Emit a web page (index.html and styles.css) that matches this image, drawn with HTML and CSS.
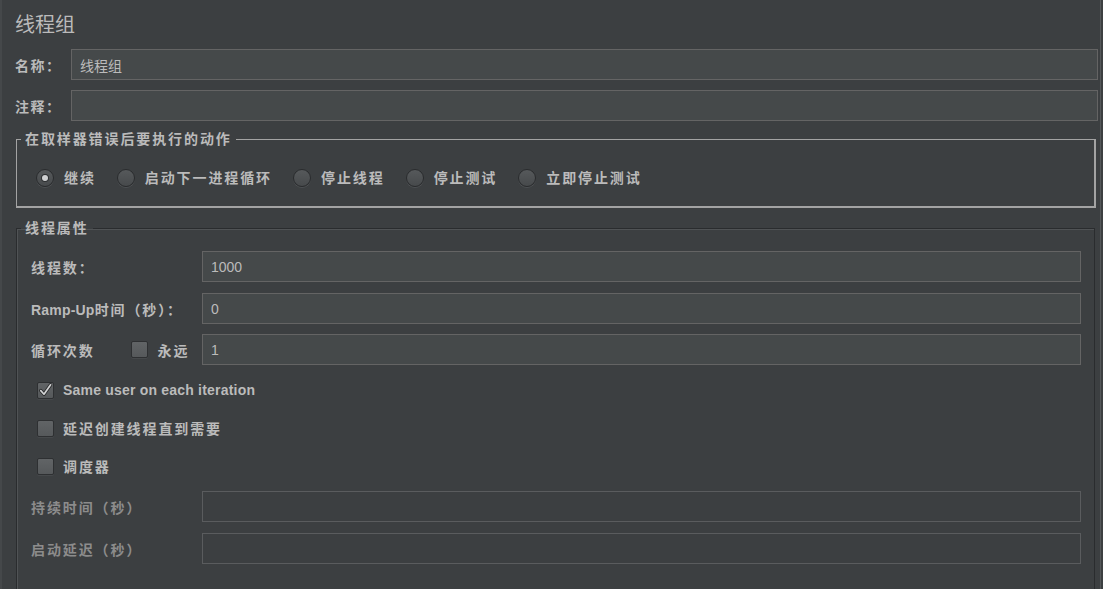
FILE: index.html
```html
<!DOCTYPE html>
<html>
<head>
    <meta charset="UTF-8">
    <title>线程组</title>
    <link rel="stylesheet" href="styles.css">
</head>
<body>
<div class="page">

    <h1 class="title">线程组</h1>

    <div class="field-row">
        <label class="cn name-label">名称：</label>
        <input class="text-input" type="text" value="线程组">
    </div>
    <div class="field-row">
        <label class="cn name-label">注释：</label>
        <input class="text-input" type="text" value="">
    </div>

    <fieldset class="group group-light">
        <legend class="cn">在取样器错误后要执行的动作</legend>
        <div class="radios">
            <span class="radio-item"><span class="radio checked"></span><span class="cn">继续</span></span>
            <span class="radio-item"><span class="radio"></span><span class="cn">启动下一进程循环</span></span>
            <span class="radio-item"><span class="radio"></span><span class="cn">停止线程</span></span>
            <span class="radio-item"><span class="radio"></span><span class="cn">停止测试</span></span>
            <span class="radio-item"><span class="radio"></span><span class="cn">立即停止测试</span></span>
        </div>
    </fieldset>

    <fieldset class="group group-etched">
        <legend class="cn">线程属性</legend>
        <div class="props">

            <div class="prop-row">
                <label class="cn prop-label">线程数：</label>
                <input class="text-input" type="text" value="1000">
            </div>
            <div class="prop-row">
                <label class="cn prop-label"><span class="latin">Ramp-Up</span>时间（秒）：</label>
                <input class="text-input" type="text" value="0">
            </div>
            <div class="prop-row">
                <div class="prop-label loop-label">
                    <span class="cn">循环次数</span>
                    <span class="check-item">
                        <span class="checkbox"></span>
                        <span class="cn">永远</span>
                    </span>
                </div>
                <input class="text-input" type="text" value="1">
            </div>

            <div class="check-row first-check">
                <span class="checkbox">
                    <svg width="17" height="17" viewBox="0 0 17 17">
                        <path d="M3.8 8.6 L7 12.2 L13.6 2.8" fill="none" stroke="#2a2b2c" stroke-width="3.4" stroke-linecap="round" stroke-linejoin="round"/>
                        <path d="M3.8 8.6 L7 12.2 L13.6 2.8" fill="none" stroke="#d2d3d4" stroke-width="1.7" stroke-linecap="round" stroke-linejoin="round"/>
                    </svg>
                </span>
                <span class="latin">Same user on each iteration</span>
            </div>
            <div class="check-row">
                <span class="checkbox"></span>
                <span class="cn">延迟创建线程直到需要</span>
            </div>
            <div class="check-row">
                <span class="checkbox"></span>
                <span class="cn">调度器</span>
            </div>

            <div class="prop-row disabled first-disabled">
                <label class="cn prop-label">持续时间（秒）</label>
                <input class="text-input" type="text" value="" disabled>
            </div>
            <div class="prop-row disabled">
                <label class="cn prop-label">启动延迟（秒）</label>
                <input class="text-input" type="text" value="" disabled>
            </div>

        </div>
    </fieldset>

</div>
</body>
</html>
```

FILE: styles.css
```css
html, body {
    margin: 0;
    height: 100%;
    overflow: hidden;
    background-color: #3c3f41;
}
body {
    font-family: "Liberation Sans", "Noto Sans CJK SC", sans-serif;
    font-size: 14px;
    color: #bbbbbb;
}
.page {
    box-sizing: border-box;
    width: 1101px;
    min-height: 640px;
    padding: 12px 2px 0 13px;
    border-left: 2px solid #45484a;
    border-right: 1px solid #55585a;
}
.title {
    margin: 0;
    font-size: 20px;
    line-height: 24px;
    font-weight: normal;
    color: #bbbbbb;
    font-family: "Noto Sans CJK SC", sans-serif;
}
.cn {
    font-family: "Liberation Sans", "Noto Sans CJK SC", sans-serif;
    font-weight: bold;
    letter-spacing: 1.9px;
}
.latin {
    font-family: "Liberation Sans", sans-serif;
    font-weight: bold;
    font-size: 14px;
    letter-spacing: 0.2px;
}

/* name / comment rows */
.field-row {
    display: flex;
    align-items: center;
    margin-top: 10px;
}
.title + .field-row {
    margin-top: 13px;
}
.name-label {
    width: 56px;
    flex: none;
    letter-spacing: 1.5px;
}
.text-input {
    flex: 1;
    box-sizing: border-box;
    height: 31px;
    margin: 0;
    padding: 0 8px;
    border: 1px solid #646464;
    background-color: #45494a;
    color: #bbbbbb;
    font-family: "Liberation Sans", "Noto Sans CJK SC", sans-serif;
    font-size: 14px;
    outline: none;
}
.text-input:disabled {
    background-color: #3c3f41;
    border-color: #5a5c5e;
}

/* group boxes */
.group {
    margin: 11px 2px 0 1px;
    padding: 0;
    min-width: 0;
}
.group legend {
    margin-left: 4px;
    padding: 0 4px;
    line-height: 14px;
}
.group-light {
    border-style: solid;
    border-color: #a3a3a3;
    border-width: 1px 2px 2px 1px;
}
.group-etched {
    margin-top: 13px;
    margin-right: 3px;
    border: 1px solid #2a2c2e;
    box-shadow: inset 1px 1px 0 #505355;
}
.props {
    padding: 16px 13px 60px 14px;
}

/* radios */
.radios {
    display: flex;
    align-items: center;
    gap: 21px;
    padding: 23px 0 19px 19px;
}
.radio-item {
    display: flex;
    align-items: center;
    gap: 10px;
    line-height: 18px;
}
.radio {
    position: relative;
    box-sizing: border-box;
    width: 18px;
    height: 18px;
    border-radius: 50%;
    border: 1px solid #2a2c2e;
    background: linear-gradient(#56595b, #474a4c);
    box-shadow: 0 1px 0 #4e5153;
}
.radio.checked::after {
    content: "";
    position: absolute;
    left: 5px;
    top: 5px;
    width: 6px;
    height: 6px;
    border-radius: 50%;
    background-color: #cfd0d1;
    box-shadow: 0 0 0 1px #2e3032;
}

/* thread properties */
.prop-row {
    display: flex;
    align-items: center;
    margin-top: 11px;
}
.props > .prop-row:first-child {
    margin-top: 0;
}
.props > .prop-row:nth-child(3) {
    margin-top: 10px;
}
.prop-label {
    width: 171px;
    flex: none;
}
.loop-label {
    display: flex;
    align-items: center;
}
.loop-label .check-item {
    margin-left: 36px;
}
.check-item {
    display: flex;
    align-items: center;
    gap: 10px;
}
.check-row {
    display: flex;
    align-items: center;
    gap: 9px;
    height: 38px;
    padding-left: 6px;
}
.first-check {
    margin-top: 6px;
}
.checkbox {
    box-sizing: border-box;
    width: 17px;
    height: 17px;
    flex: none;
    border: 1px solid #2e3032;
    border-radius: 2px;
    background: linear-gradient(#616466, #56595b);
    box-shadow: 0 1px 0 #46494b;
}
.checkbox svg {
    display: block;
    margin: -1px 0 0 -1px;
}
.disabled .prop-label {
    color: #8c8c8c;
}
.first-disabled {
    margin-top: 6px;
}
```
